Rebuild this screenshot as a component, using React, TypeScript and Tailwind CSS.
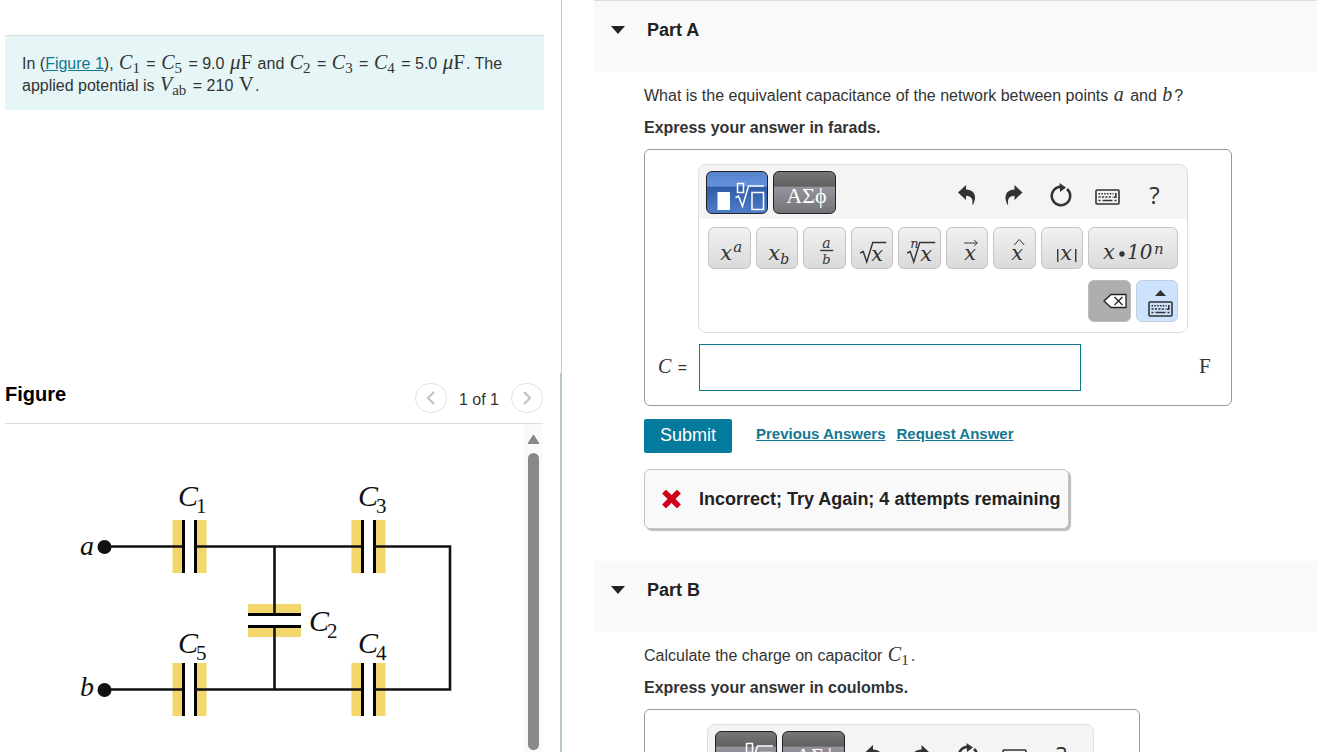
import type { ReactNode } from "react";

const SERIF = "font-['Liberation_Serif',serif]";

function Var({ name, sub }: { name: string; sub?: string }) {
  return (
    <span className={`${SERIF} mr-0.5 ml-px text-[20px] leading-none`}>
      <i>{name}</i>
      {sub && <sub className="text-[15px]">{sub}</sub>}
    </span>
  );
}

function Unit({ children }: { children: ReactNode }) {
  return <span className={`${SERIF} mx-px text-[21px] leading-none`}>{children}</span>;
}

function UndoIcon() {
  return (
    <svg width="18" height="20" viewBox="0 0 18 20" fill="#333">
      <path d="M0 7.5 8 0v4.4c6 .2 9 3.3 9 8.2 0 2.700-.8 5.200-2 7.200-.6 0-.8-.1-.7-.5 1-4.900-.9-8.200-6.300-8.500V15z" />
    </svg>
  );
}

function RedoIcon() {
  return (
    <svg width="18" height="20" viewBox="0 0 18 20" fill="#333">
      <path d="M17.500 7.500 9.500 0v4.400c-6 .2-9 3.300-9 8.200 0 2.700.8 5.200 2 7.200.6 0 .8-.1.7-.5-1-4.900.9-8.200 6.300-8.500V15z" />
    </svg>
  );
}

function ResetIcon() {
  return (
    <svg width="22" height="24" viewBox="0 0 22 24">
      <path d="M17 6a9.200 9.200 0 1 1-7-2.200" fill="none" stroke="#333" strokeWidth="2.600" />
      <path d="M9.500 0 16 4.500 10 9z" fill="#333" />
    </svg>
  );
}

function KeyboardIcon() {
  return (
    <svg width="25" height="16" viewBox="0 0 25 16" fill="none" stroke="#333">
      <rect x="1" y="1" width="23" height="14" rx="1" strokeWidth="1.600" />
      <path d="M3.500 4.800h15" strokeWidth="1.600" strokeDasharray="1.600 1.200" />
      <path d="M3.500 8h14" strokeWidth="1.600" strokeDasharray="2.200 1.200" />
      <path d="M20.800 4v4.200h-2.300M3.500 11.500h2M7.500 11.500h10M19.500 11.500h2" strokeWidth="1.600" />
    </svg>
  );
}

function TemplateButton({ active }: { active?: boolean }) {
  const look = active
    ? "bg-[linear-gradient(#5583cd_0,#6592dc_35%,#2f5ba8_36%,#4f7dca_100%)]"
    : "bg-[linear-gradient(#777_0,#606060_35%,#96959f_36%,#737377_100%)]";
  return (
    <button aria-label="Templates" className={`h-[43px] w-[62px] rounded-md border border-[#222] ${look}`}>
      <svg width="60" height="41" viewBox="0 0 60 41">
        <path d="M10.500 20h12.500v18H10.500z" fill="#fff" />
        <path
          d="M30.500 11.500h6v9h-6zM45 20.500h11.500v17H45zM28.500 25.500l3-1.500 4 10.500 6-20.500h15.500"
          fill="none"
          stroke="#fff"
          strokeWidth="1.500"
        />
      </svg>
    </button>
  );
}

function EditorToolbar({ active }: { active?: boolean }) {
  const tool = "flex h-[43px] w-[47px] items-center justify-center";
  return (
    <div className="flex h-[54px] justify-between rounded-t-lg bg-[#f4f4f4] pt-1.5 pr-[9px] pl-[7px]">
      <div className="mr-[5px] flex gap-[5px]">
        <TemplateButton active={active} />
        <button
          className={`${SERIF} h-[43px] w-[63px] rounded-md border border-[#222] bg-[linear-gradient(#777_0,#606060_35%,#96959f_36%,#737377_100%)] pt-1.5 pl-1 text-[22px] leading-none text-white`}
        >
          ΑΣϕ
        </button>
      </div>
      <div className="flex pt-0.5">
        <button aria-label="Undo" className={tool}><UndoIcon /></button>
        <button aria-label="Redo" className={tool}><RedoIcon /></button>
        <button aria-label="Reset" className={tool}><ResetIcon /></button>
        <button aria-label="Keyboard shortcuts" className={`${tool} pt-1`}><KeyboardIcon /></button>
        <button aria-label="Help" className={`${tool} font-['Open_Sans',sans-serif] text-[24px]`}>?</button>
      </div>
    </div>
  );
}

function Key({ label, wide, children }: { label: string; wide?: boolean; children: ReactNode }) {
  return (
    <button
      aria-label={label}
      className={`h-[42px] rounded-md border border-[#c6c6c6] bg-linear-to-b from-[#f1f1f1] to-[#dadada] ${wide ? "col-span-2" : ""}`}
    >
      <svg
        viewBox={wide ? "0 0 88 40" : "0 0 40 40"}
        className="h-10 w-full font-['DejaVu_Serif',serif] italic"
        fill="#333"
      >
        {children}
      </svg>
    </button>
  );
}

function KeyGrid() {
  const line = { fill: "none", stroke: "#333", strokeWidth: 1.4 };
  return (
    <div className="grid grid-cols-10 gap-x-[5px] gap-y-[11px] px-[9px] pt-2 pb-[10px]">
      <Key label="Superscript">
        <text x="11" y="32" fontSize="21">x</text>
        <text x="24" y="24" fontSize="15">a</text>
      </Key>
      <Key label="Subscript">
        <text x="11" y="32" fontSize="21">x</text>
        <text x="23" y="36" fontSize="14">b</text>
      </Key>
      <Key label="Fraction">
        <text x="18" y="20" fontSize="14">a</text>
        <path d="M16 22.500h13" {...line} />
        <text x="18" y="36" fontSize="13">b</text>
      </Key>
      <Key label="Square root">
        <path d="M8 25l3-1.500 3.500 10.500 6-19.500H34" {...line} />
        <text x="19" y="33" fontSize="21">x</text>
      </Key>
      <Key label="Nth root">
        <text x="11" y="20" fontSize="13">n</text>
        <path d="M8 25l3-1.500 3.500 10.500 6-19.500H36" {...line} />
        <text x="21" y="33" fontSize="21">x</text>
      </Key>
      <Key label="Vector">
        <path d="M17 15h13M27 12l3 3-3 3" {...line} strokeWidth={1} />
        <text x="17" y="32" fontSize="21">x</text>
      </Key>
      <Key label="Unit vector">
        <path d="M20 17l5-5.500 5 5.500" {...line} strokeWidth={1} />
        <text x="17" y="32" fontSize="21">x</text>
      </Key>
      <Key label="Absolute value">
        <path d="M15.500 21v13M33.500 21v13" {...line} />
        <text x="18" y="32" fontSize="21">x</text>
      </Key>
      <Key label="Scientific notation" wide>
        <text x="14" y="31" fontSize="21">x</text>
        <circle cx="33" cy="26" r="2.700" />
        <text x="38" y="31" fontSize="20">10</text>
        <text x="65" y="26" fontSize="15">n</text>
      </Key>
      <button
        aria-label="Delete"
        className="col-start-9 flex h-[42px] items-center justify-end rounded-md border border-[#bbb] bg-[#aeaeae] pr-[3px]"
      >
        <svg width="24" height="16" viewBox="0 0 24 16" stroke="#222" strokeWidth="1.300">
          <path d="M1 8l7-6.500h15v13H8z" fill="#fff" />
          <path d="M11.500 4l8 8M19.500 4l-8 8" />
        </svg>
      </button>
      <button
        aria-label="Toggle keyboard"
        className="flex h-[42px] flex-col items-center justify-end gap-[5px] rounded-md border border-[#c2cede] bg-[#cde3fd] pb-1 pl-2"
      >
        <svg width="11" height="6" viewBox="0 0 11 6">
          <path d="M5.500 0 11 6H0z" fill="#333" />
        </svg>
        <KeyboardIcon />
      </button>
    </div>
  );
}

function PartHeader({ title }: { title: string }) {
  return (
    <div className="flex h-[71px] items-start bg-[#f9f9f9] pt-4 pl-[17px] text-[#222]">
      <button className="flex items-center gap-[22px] text-[18px] leading-[26px] font-bold">
        <svg width="14" height="8" viewBox="0 0 14 8">
          <path d="M0 0h14L7 8z" fill="#222" />
        </svg>
        {title}
      </button>
    </div>
  );
}

function Capacitor({ x, y }: { x: number; y: number }) {
  return (
    <g>
      <path d={`M${x - 17} ${y - 26.5}h11v53h-11zM${x + 6} ${y - 26.5}h11v53h-11z`} fill="#f3d66c" />
      <path d={`M${x - 6} ${y - 26.5}v53M${x + 6} ${y - 26.5}v53`} stroke="#000" strokeWidth="3" />
    </g>
  );
}

function Label({ x, y, sub }: { x: number; y: number; sub: string }) {
  return (
    <>
      <text x={x} y={y} fontSize="30" fontStyle="italic">C</text>
      <text x={x + 18} y={y + 7} fontSize="21">{sub}</text>
    </>
  );
}

function Circuit() {
  return (
    <svg width="400" height="260" viewBox="0 0 400 260" className={SERIF} fill="#111">
      <Capacitor x={129.5} y={76.5} />
      <Capacitor x={308.5} y={76.5} />
      <Capacitor x={129.5} y={219.5} />
      <Capacitor x={308.5} y={219.5} />
      <path d="M188 134h53v10h-53zM188 157h53v10h-53z" fill="#f3d66c" />
      <path d="M188 144.500h53M188 156.500h53" stroke="#000" strokeWidth="3" />
      <path
        d="M44 76.500h79M135 76.500h167M314 76.500h76v143h-76M302 219.500H135M123 219.500H44M214.500 76.500v68M214.500 156.500v63"
        fill="none"
        stroke="#111"
        strokeWidth="2.600"
      />
      <circle cx="44.500" cy="77" r="7" />
      <circle cx="44.500" cy="220" r="7" />
      <text x="20" y="85" fontSize="28" fontStyle="italic">a</text>
      <text x="20" y="226" fontSize="28" fontStyle="italic">b</text>
      <Label x={118} y={36} sub="1" />
      <Label x={298} y={36} sub="3" />
      <Label x={249} y={161} sub="2" />
      <Label x={118} y={183} sub="5" />
      <Label x={298} y={183} sub="4" />
    </svg>
  );
}

function PagerButton({ label, d }: { label: string; d: string }) {
  return (
    <button aria-label={label} className="flex h-[30px] w-8 items-center justify-center rounded-full border border-[#e2e2e2]">
      <svg width="10" height="14" viewBox="0 0 10 14">
        <path d={d} fill="none" stroke="#c2c2c2" strokeWidth="2.200" />
      </svg>
    </button>
  );
}

export default function App() {
  return (
    <div className="grid h-screen grid-cols-[562fr_755fr] overflow-hidden bg-white font-['Liberation_Sans',Arial,sans-serif] text-[16px] text-[#333]">
      <aside className="grid min-h-0 grid-rows-[373fr_379fr]">
        <section className="border-r border-[#b9c8d0] pt-[35px] pr-[17px] pl-[5px]">
          <p className="border-t border-[#d3dedf] bg-[#e6f6f6] pt-4 pr-3 pb-3.5 pl-[17px] leading-[21px]">
            In (<a href="#figure" className="text-[#147791] underline">Figure 1</a>), <Var name="C" sub="1" /> ={" "}
            <Var name="C" sub="5" /> = 9.0 <Unit><i>μ</i>F</Unit> and <Var name="C" sub="2" /> ={" "}
            <Var name="C" sub="3" /> = <Var name="C" sub="4" /> = 5.0 <Unit><i>μ</i>F</Unit>. The applied potential
            is <Var name="V" sub="ab" /> = 210 <Unit>V</Unit>.
          </p>
        </section>

        <section id="figure" className="flex min-h-0 flex-col border-r-2 border-[#b9c8d0] pr-[17px] pl-[5px]">
          <div className="flex h-[51px] items-center border-b border-[#ddd]">
            <h2 className="flex-1 pb-2 text-[20px] font-bold text-black">Figure</h2>
            <div className="flex items-center gap-3">
              <PagerButton label="Previous figure" d="M8 1 2 7l6 6" />
              <span className="pt-1">1 of 1</span>
              <PagerButton label="Next figure" d="M2 1l6 6-6 6" />
            </div>
          </div>
          <div className="flex min-h-0 flex-1">
            <div className="min-w-0 flex-1 overflow-hidden pt-[46px] pl-[55px]">
              <Circuit />
            </div>
            <div className="flex w-[19px] flex-col items-center gap-2 bg-[#fafafa] pt-2.5 pb-0.5">
              <svg width="13" height="11" viewBox="0 0 13 11">
                <path d="M6.500 1 12 9.500H1z" fill="#888" stroke="#888" strokeLinejoin="round" />
              </svg>
              <div className="w-[11px] flex-1 rounded-full bg-[#888]" />
            </div>
          </div>
        </section>
      </aside>

      <main className="min-h-0 overflow-hidden pl-8">
        <div className="border-t border-[#ddd]">
          <PartHeader title="Part A" />
        </div>
        <section className="pt-3 pr-4 pb-8 pl-[50px]">
          <p className="leading-6">
            What is the equivalent capacitance of the network between points <Var name="a" /> and <Var name="b" />?
          </p>
          <p className="mt-2 leading-6 font-bold">Express your answer in farads.</p>
          <div className="mt-[9px] grid w-fit grid-cols-[53px_490px_43px] rounded-md border border-[#999] pt-3.5 pb-[14px]">
            <div className="col-start-2 rounded-lg border border-[#ddd]">
              <EditorToolbar active />
              <KeyGrid />
            </div>
            <label htmlFor="answer-a" className="col-start-1 mt-[11px] self-center pl-3">
              <Var name="C" /> =
            </label>
            <input id="answer-a" className="mt-[11px] ml-px h-[47px] w-[382px] border border-[#147791] px-2" />
            <span className="mt-[11px] self-center pl-[10px]">
              <Unit>F</Unit>
            </span>
          </div>
          <div className="mt-[13px] flex items-center">
            <button className="h-[34px] rounded-xs bg-[#047a9c] px-4 pb-0.5 text-[18px] text-white">Submit</button>
            <a href="#previous" className="ml-6 pb-1 text-[15px] font-bold text-[#147791] underline">Previous Answers</a>
            <a href="#request" className="ml-[11px] pb-1 text-[15px] font-bold text-[#147791] underline">Request Answer</a>
          </div>
          <div
            role="status"
            className="mt-4 flex h-[60px] w-fit items-center gap-[18px] rounded-md border border-[#c4c4c4] bg-[#f9f9f9] pr-2 pl-[17px] text-[18px] font-bold text-[#222] shadow-[2px_2px_1px_#bbb]"
          >
            <svg width="19" height="18" viewBox="0 0 19 18">
              <path d="M4 3.500l11 11M15 3.500l-11 11" stroke="#d0021b" strokeWidth="5.500" strokeLinecap="square" strokeLinejoin="round" />
            </svg>
            Incorrect; Try Again; 4 attempts remaining
          </div>
        </section>

        <PartHeader title="Part B" />
        <section className="pt-3 pr-4 pl-[50px]">
          <p className="leading-6">
            Calculate the charge on capacitor <Var name="C" sub="1" />.
          </p>
          <p className="mt-2 leading-6 font-bold">Express your answer in coulombs.</p>
          <div className="mt-[9px] w-fit rounded-md border border-[#999] pt-3.5 pr-[45px] pb-3.5 pl-[62px]">
            <div className="w-[387px] rounded-lg border border-[#ddd]">
              <EditorToolbar />
            </div>
          </div>
        </section>
      </main>
    </div>
  );
}
